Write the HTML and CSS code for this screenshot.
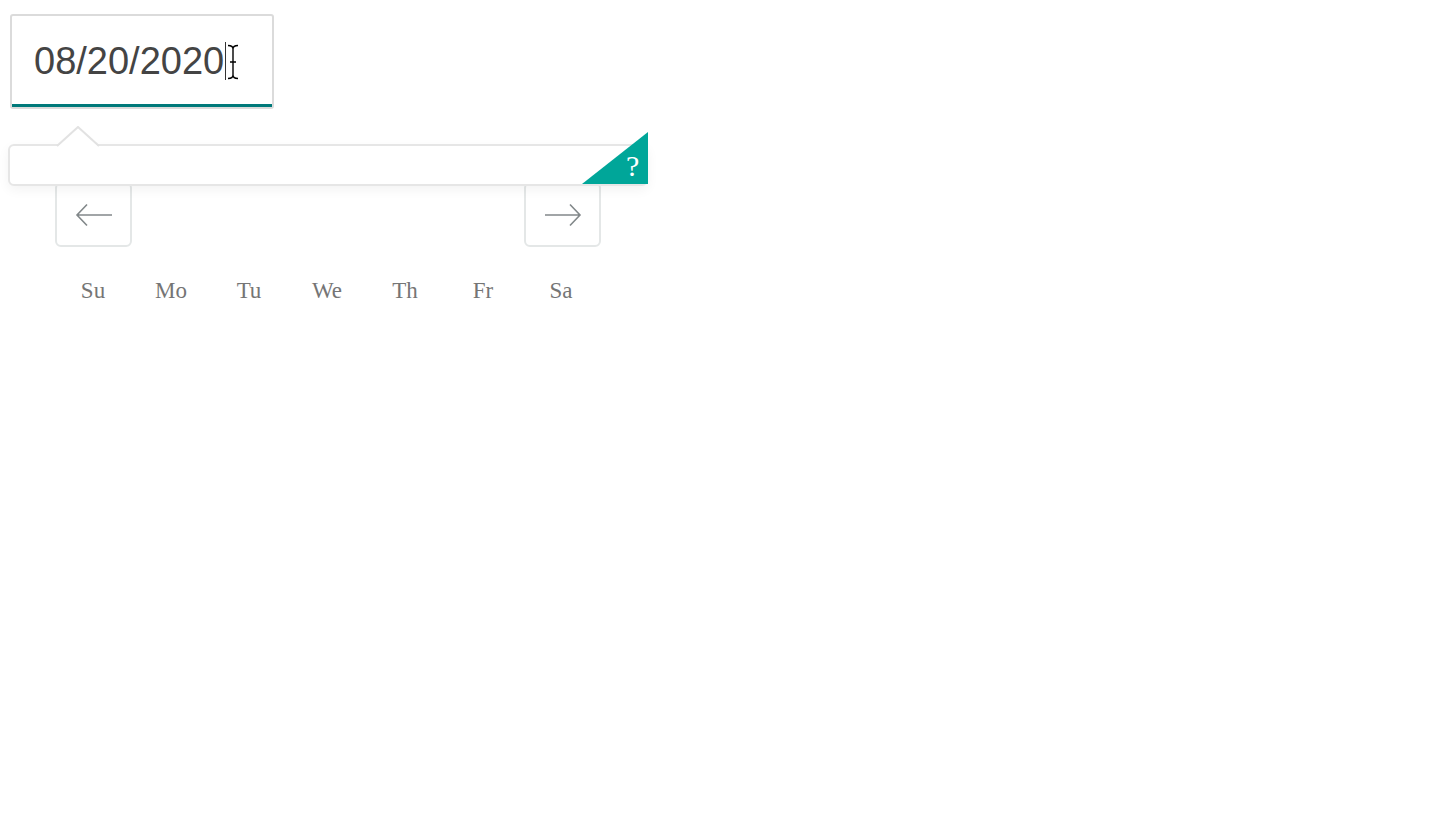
FILE: index.html
```html
<!DOCTYPE html>
<html lang="en">
<head>
<meta charset="utf-8">
<title>Date picker</title>
<link rel="stylesheet" href="styles.css">
</head>
<body>
<div class="page">
  <div class="date-input">
    <div class="date-input-field">
      <span class="date-value">08/20/2020</span><span class="caret"></span>
    </div>
    <svg class="ibeam" width="14" height="36" viewBox="0 0 14 36" aria-hidden="true">
      <path d="M2 1.5 C5 1.5 7 2.5 7 5 L7 31 C7 33.5 5 34.5 2 34.5 M12 1.5 C9 1.5 7 2.5 7 5 M7 31 C7 33.5 9 34.5 12 34.5 M4 18 L10 18" fill="none" stroke="#fff" stroke-width="3.2"/>
      <path d="M2 1.5 C5 1.5 7 2.5 7 5 L7 31 C7 33.5 5 34.5 2 34.5 M12 1.5 C9 1.5 7 2.5 7 5 M7 31 C7 33.5 9 34.5 12 34.5 M4 18 L10 18" fill="none" stroke="#000" stroke-width="1.4"/>
    </svg>
  </div>

  <div class="picker">
    <div class="picker-frame">
      <svg class="fang" width="44" height="22" viewBox="0 0 44 22" aria-hidden="true">
        <polygon points="0,22 22,0 44,22" fill="#fff"/>
        <polyline points="1,20 22,1 43,20" fill="none" stroke="#e2e2e2" stroke-width="2"/>
      </svg>
      <div class="shortcuts">
        <span class="shortcuts-q">?</span>
      </div>
    </div>
    <div class="nav">
      <button class="nav-btn" aria-label="Previous month">
        <svg width="38" height="24" viewBox="0 0 38 24"><path d="M37 12 H2 M12 1.5 L2 12 L12 22.5" fill="none" stroke="#82888a" stroke-width="1.6"/></svg>
      </button>
      <button class="nav-btn" aria-label="Next month">
        <svg width="38" height="24" viewBox="0 0 38 24"><path d="M1 12 H36 M26 1.5 L36 12 L26 22.5" fill="none" stroke="#82888a" stroke-width="1.6"/></svg>
      </button>
    </div>
    <ul class="week-header">
      <li>Su</li><li>Mo</li><li>Tu</li><li>We</li><li>Th</li><li>Fr</li><li>Sa</li>
    </ul>
  </div>
</div>
</body>
</html>
```
FILE: styles.css
```css
html, body {
  margin: 0;
  padding: 0;
  background: #fff;
}

.page {
  padding: 14px 0 0 8px;
}

.date-input {
  position: relative;
  margin-left: 2px;
  width: 260px;
  border: 2px solid #dbdbdb;
  border-radius: 3px;
  background: #fff;
}

.date-input-field {
  display: flex;
  align-items: center;
  height: 48px;
  padding: 21px 0 19px 22px;
  border-bottom: 3px solid #00797a;
  font-family: "Liberation Sans", Arial, sans-serif;
  font-size: 38px;
  line-height: 48px;
  color: #444;
}

.caret {
  display: inline-block;
  width: 1px;
  height: 38px;
  margin-left: 1px;
  background: #333;
}

.ibeam {
  position: absolute;
  left: 214px;
  top: 28px;
}

.picker {
  margin-top: 35px;
  width: 640px;
}

.picker-frame {
  position: relative;
  box-sizing: border-box;
  height: 42px;
  border: 2px solid #e6e6e6;
  border-radius: 6px;
  background: #fff;
  box-shadow: 0 4px 12px rgba(0, 0, 0, 0.05);
}

.fang {
  position: absolute;
  left: 46px;
  top: -20px;
}

.nav {
  display: flex;
  justify-content: space-between;
  margin-top: -4px;
  padding: 0 47px;
}

.nav-btn {
  box-sizing: border-box;
  display: flex;
  align-items: center;
  justify-content: center;
  width: 77px;
  height: 65px;
  padding: 0;
  border: 2px solid #e4e7e7;
  border-radius: 6px;
  background: #fff;
}

.week-header {
  display: grid;
  grid-template-columns: repeat(7, 78px);
  margin: 30px 0 0 46px;
  padding: 0;
  list-style: none;
}

.week-header li {
  text-align: center;
  font-family: "Liberation Serif", "Times New Roman", serif;
  font-size: 23px;
  line-height: 28px;
  color: #757575;
}

.shortcuts {
  position: absolute;
  right: -2px;
  bottom: 0;
  width: 0;
  height: 0;
  border-top: 52px solid transparent;
  border-right: 66px solid #00a699;
}

.shortcuts-q {
  position: absolute;
  left: 44px;
  top: -33px;
  font-family: "Liberation Serif", "Times New Roman", serif;
  font-size: 30px;
  line-height: 30px;
  color: #fff;
}
```
